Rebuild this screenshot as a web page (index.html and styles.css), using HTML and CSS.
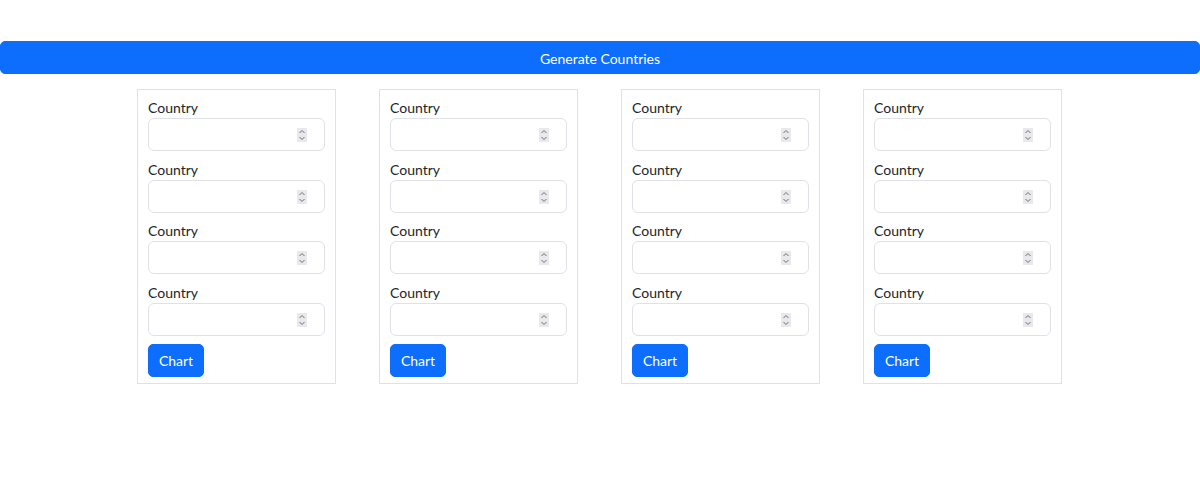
FILE: index.html
```html
<!DOCTYPE html>
<html lang="en">
<head>
<meta charset="utf-8">
<title>Countries</title>
<link rel="stylesheet" href="styles.css">
</head>
<body>
<main class="page">
  <button class="btn btn-wide" type="button">Generate Countries</button>
  <div class="cards">
    <section class="card">
      <div class="field"><label class="label">Country</label><div class="input"><input type="text"><span class="spin"><svg width="10" height="14" viewBox="0 0 10 14"><path d="M2.5 5 L5 2.5 L7.5 5 M2.5 9 L5 11.5 L7.5 9" fill="none" stroke="#6f6f6f" stroke-width="1"/></svg></span></div></div>
      <div class="field"><label class="label">Country</label><div class="input"><input type="text"><span class="spin"><svg width="10" height="14" viewBox="0 0 10 14"><path d="M2.5 5 L5 2.5 L7.5 5 M2.5 9 L5 11.5 L7.5 9" fill="none" stroke="#6f6f6f" stroke-width="1"/></svg></span></div></div>
      <div class="field"><label class="label">Country</label><div class="input"><input type="text"><span class="spin"><svg width="10" height="14" viewBox="0 0 10 14"><path d="M2.5 5 L5 2.5 L7.5 5 M2.5 9 L5 11.5 L7.5 9" fill="none" stroke="#6f6f6f" stroke-width="1"/></svg></span></div></div>
      <div class="field"><label class="label">Country</label><div class="input"><input type="text"><span class="spin"><svg width="10" height="14" viewBox="0 0 10 14"><path d="M2.5 5 L5 2.5 L7.5 5 M2.5 9 L5 11.5 L7.5 9" fill="none" stroke="#6f6f6f" stroke-width="1"/></svg></span></div></div>
      <button class="btn btn-chart" type="button">Chart</button>
    </section>
    <section class="card">
      <div class="field"><label class="label">Country</label><div class="input"><input type="text"><span class="spin"><svg width="10" height="14" viewBox="0 0 10 14"><path d="M2.5 5 L5 2.5 L7.5 5 M2.5 9 L5 11.5 L7.5 9" fill="none" stroke="#6f6f6f" stroke-width="1"/></svg></span></div></div>
      <div class="field"><label class="label">Country</label><div class="input"><input type="text"><span class="spin"><svg width="10" height="14" viewBox="0 0 10 14"><path d="M2.5 5 L5 2.5 L7.5 5 M2.5 9 L5 11.5 L7.5 9" fill="none" stroke="#6f6f6f" stroke-width="1"/></svg></span></div></div>
      <div class="field"><label class="label">Country</label><div class="input"><input type="text"><span class="spin"><svg width="10" height="14" viewBox="0 0 10 14"><path d="M2.5 5 L5 2.5 L7.5 5 M2.5 9 L5 11.5 L7.5 9" fill="none" stroke="#6f6f6f" stroke-width="1"/></svg></span></div></div>
      <div class="field"><label class="label">Country</label><div class="input"><input type="text"><span class="spin"><svg width="10" height="14" viewBox="0 0 10 14"><path d="M2.5 5 L5 2.5 L7.5 5 M2.5 9 L5 11.5 L7.5 9" fill="none" stroke="#6f6f6f" stroke-width="1"/></svg></span></div></div>
      <button class="btn btn-chart" type="button">Chart</button>
    </section>
    <section class="card">
      <div class="field"><label class="label">Country</label><div class="input"><input type="text"><span class="spin"><svg width="10" height="14" viewBox="0 0 10 14"><path d="M2.5 5 L5 2.5 L7.5 5 M2.5 9 L5 11.5 L7.5 9" fill="none" stroke="#6f6f6f" stroke-width="1"/></svg></span></div></div>
      <div class="field"><label class="label">Country</label><div class="input"><input type="text"><span class="spin"><svg width="10" height="14" viewBox="0 0 10 14"><path d="M2.5 5 L5 2.5 L7.5 5 M2.5 9 L5 11.5 L7.5 9" fill="none" stroke="#6f6f6f" stroke-width="1"/></svg></span></div></div>
      <div class="field"><label class="label">Country</label><div class="input"><input type="text"><span class="spin"><svg width="10" height="14" viewBox="0 0 10 14"><path d="M2.5 5 L5 2.5 L7.5 5 M2.5 9 L5 11.5 L7.5 9" fill="none" stroke="#6f6f6f" stroke-width="1"/></svg></span></div></div>
      <div class="field"><label class="label">Country</label><div class="input"><input type="text"><span class="spin"><svg width="10" height="14" viewBox="0 0 10 14"><path d="M2.5 5 L5 2.5 L7.5 5 M2.5 9 L5 11.5 L7.5 9" fill="none" stroke="#6f6f6f" stroke-width="1"/></svg></span></div></div>
      <button class="btn btn-chart" type="button">Chart</button>
    </section>
    <section class="card">
      <div class="field"><label class="label">Country</label><div class="input"><input type="text"><span class="spin"><svg width="10" height="14" viewBox="0 0 10 14"><path d="M2.5 5 L5 2.5 L7.5 5 M2.5 9 L5 11.5 L7.5 9" fill="none" stroke="#6f6f6f" stroke-width="1"/></svg></span></div></div>
      <div class="field"><label class="label">Country</label><div class="input"><input type="text"><span class="spin"><svg width="10" height="14" viewBox="0 0 10 14"><path d="M2.5 5 L5 2.5 L7.5 5 M2.5 9 L5 11.5 L7.5 9" fill="none" stroke="#6f6f6f" stroke-width="1"/></svg></span></div></div>
      <div class="field"><label class="label">Country</label><div class="input"><input type="text"><span class="spin"><svg width="10" height="14" viewBox="0 0 10 14"><path d="M2.5 5 L5 2.5 L7.5 5 M2.5 9 L5 11.5 L7.5 9" fill="none" stroke="#6f6f6f" stroke-width="1"/></svg></span></div></div>
      <div class="field"><label class="label">Country</label><div class="input"><input type="text"><span class="spin"><svg width="10" height="14" viewBox="0 0 10 14"><path d="M2.5 5 L5 2.5 L7.5 5 M2.5 9 L5 11.5 L7.5 9" fill="none" stroke="#6f6f6f" stroke-width="1"/></svg></span></div></div>
      <button class="btn btn-chart" type="button">Chart</button>
    </section>
  </div>
</main>
</body>
</html>
```

FILE: styles.css
```css
* { box-sizing: border-box; }

html, body {
  margin: 0;
  padding: 0;
  background: #ffffff;
}

body {
  font-family: "Lato", "Noto Sans", sans-serif;
  font-size: 14px;
  line-height: 21px;
  color: #212529;
}

.page {
  padding-top: 41px;
  display: flex;
  flex-direction: column;
}

.btn {
  display: block;
  font-family: inherit;
  font-size: 14px;
  line-height: 21px;
  color: #ffffff;
  background: #0d6efd;
  border: 1px solid #0d6efd;
  border-radius: 5px;
  cursor: pointer;
}

.btn-wide {
  width: 100%;
  height: 33px;
  padding: 6px 10px 4px;
  text-align: center;
}

.cards {
  display: flex;
  justify-content: center;
  gap: 43px;
  margin-top: 15px;
  padding-right: 1px;
}

.card {
  width: 199px;
  border: 1px solid #dee2e6;
  padding: 7px 10px 6px;
  display: flex;
  flex-direction: column;
}

.field {
  display: flex;
  flex-direction: column;
  margin-bottom: 7.5px;
}

.label {
  display: block;
  height: 21px;
}

.input {
  height: 33px;
  border: 1px solid #dee2e6;
  border-radius: 6px;
  display: flex;
  align-items: center;
  padding: 0 17px 0 10px;
  background: #ffffff;
}

.input input {
  flex: 1;
  min-width: 0;
  border: none;
  outline: none;
  background: transparent;
  font: inherit;
  padding: 0;
  height: 21px;
}

.spin {
  width: 10px;
  height: 14px;
  background: #e9e9ed;
  display: flex;
  margin-top: 1px;
}

.btn-chart {
  align-self: flex-start;
  width: 56px;
  height: 33px;
  padding: 5px 0;
  margin-top: 0.5px;
  text-align: center;
}
```
